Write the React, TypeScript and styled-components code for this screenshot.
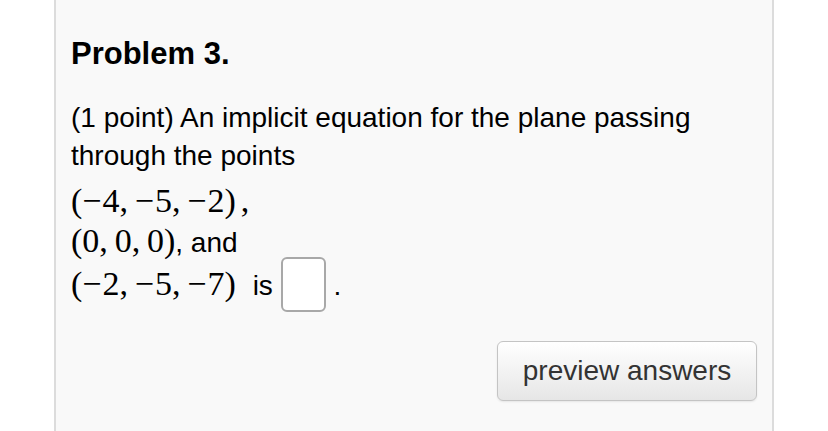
import styled, { createGlobalStyle } from "styled-components";

const GlobalStyle = createGlobalStyle`
  html, body {
    margin: 0;
    padding: 0;
    background: #ffffff;
  }

  body {
    font-family: "Liberation Sans", Arial, sans-serif;
    color: #000;
  }
`;

const Page = styled.div`
  height: 431px;
  padding-left: 54px;
  box-sizing: border-box;
`;

const Panel = styled.section`
  width: 720px;
  height: 431px;
  box-sizing: border-box;
  border-left: 2px solid #dcdcdc;
  border-right: 2px solid #dcdcdc;
  background: #f9f9f9;
  padding: 35px 15px 0 15px;
  display: flex;
  flex-direction: column;
`;

const Title = styled.h3`
  margin: 0;
  font-size: 31px;
  line-height: 37px;
  font-weight: bold;
`;

const Body = styled.div`
  margin-top: 27px;
  font-size: 28px;
`;

const Line = styled.div<{ $space?: number }>`
  line-height: 38px;
  margin-top: ${(p) => p.$space ?? 0}px;
  white-space: nowrap;
`;

const Math = styled.span`
  font-family: "Liberation Serif", "Times New Roman", serif;
  font-size: 34px;
  line-height: 1;
`;

const Minus = styled.span`
  margin-right: 1px;
`;

const TrailingComma = styled(Math)`
  margin-left: 5px;
`;

const Word = styled.span`
  margin-left: 9px;
`;

const AnswerBox = styled.span`
  display: inline-block;
  width: 41px;
  height: 51px;
  vertical-align: -17px;
  background: #fff;
  border: 2px solid #a8a8a8;
  border-radius: 6px;
`;

const Actions = styled.div`
  display: flex;
  justify-content: flex-end;
  margin-top: 29px;
`;

const Button = styled.button`
  width: 260px;
  height: 60px;
  font-family: "Liberation Sans", Arial, sans-serif;
  font-size: 28px;
  color: #333;
  background: linear-gradient(#ffffff, #e6e6e6);
  border: 1px solid #c4c4c4;
  border-radius: 6px;
  box-shadow: 0 1px 2px rgba(0, 0, 0, 0.08);
  padding: 0;
  cursor: pointer;
`;

const thin = "\u2009";

const abs = (v: number) => String(v < 0 ? -v : v);

function Point({ values }: { values: number[] }) {
  return (
    <Math>
      (
      {values.map((v, i) => (
        <span key={i}>
          {v < 0 && <Minus>−</Minus>}
          {abs(v)}
          {i < values.length - 1 && `,${thin}`}
        </span>
      ))}
      )
    </Math>
  );
}

export default function App() {
  return (
    <Page>
      <GlobalStyle />
      <Panel>
        <Title>Problem 3.</Title>
        <Body>
          <Line>(1 point) An implicit equation for the plane passing</Line>
          <Line>through the points</Line>
          <Line $space={9}>
            <Point values={[-4, -5, -2]} />
            <TrailingComma>,</TrailingComma>
          </Line>
          <Line $space={2}>
            <Point values={[0, 0, 0]} />, and
          </Line>
          <Line $space={-5}>
            <Point values={[-2, -5, -7]} /> <Word>is</Word> <AnswerBox /> .
          </Line>
        </Body>
        <Actions>
          <Button>preview answers</Button>
        </Actions>
      </Panel>
    </Page>
  );
}
